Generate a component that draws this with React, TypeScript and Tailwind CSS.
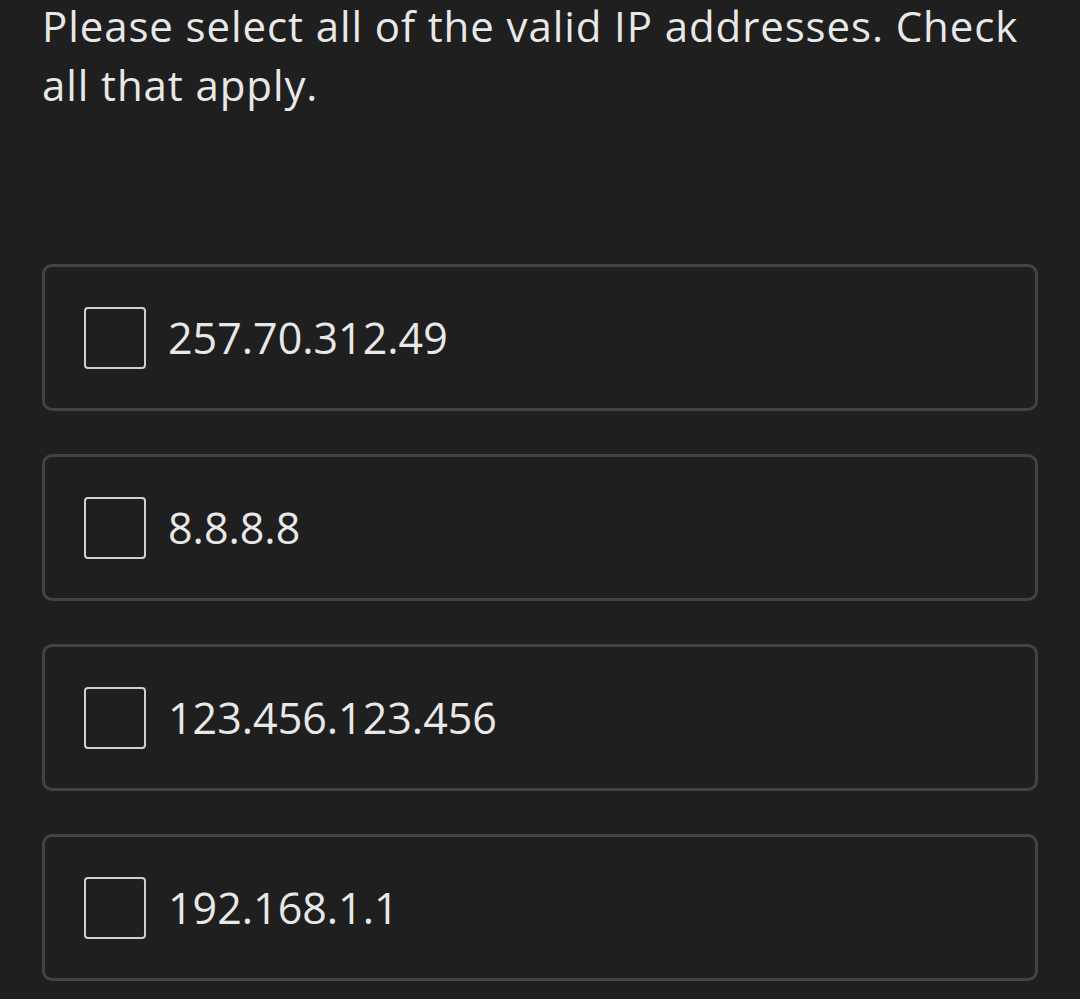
import React from 'react';

const options = ['257.70.312.49', '8.8.8.8', '123.456.123.456', '192.168.1.1'];

const App: React.FC = () => {
  return (
    <div className="min-h-screen w-full bg-[#1f1f1f] px-[42px] font-['Open_Sans','Noto_Sans',sans-serif] text-[#e8e8e8]">
      <h1 className="pt-[1px] text-[42px] leading-[59px] font-normal tracking-[0.9px] [&]:-mt-[5px]">
        Please select all of the valid IP addresses. Check all that apply.
      </h1>
      <div className="mt-[150px] flex flex-col gap-[43px]">
        {options.map(opt => (
          <label
            key={opt}
            className="flex h-[147px] items-center gap-[22px] rounded-[10px] border-[3px] border-[#434343] pl-[39px]"
          >
            <span className="h-[62px] w-[62px] shrink-0 rounded-[4px] border-2 border-[#cfcfcf]" />
            <span className="text-[43px] leading-none">{opt}</span>
          </label>
        ))}
      </div>
    </div>
  );
};

export default App;
